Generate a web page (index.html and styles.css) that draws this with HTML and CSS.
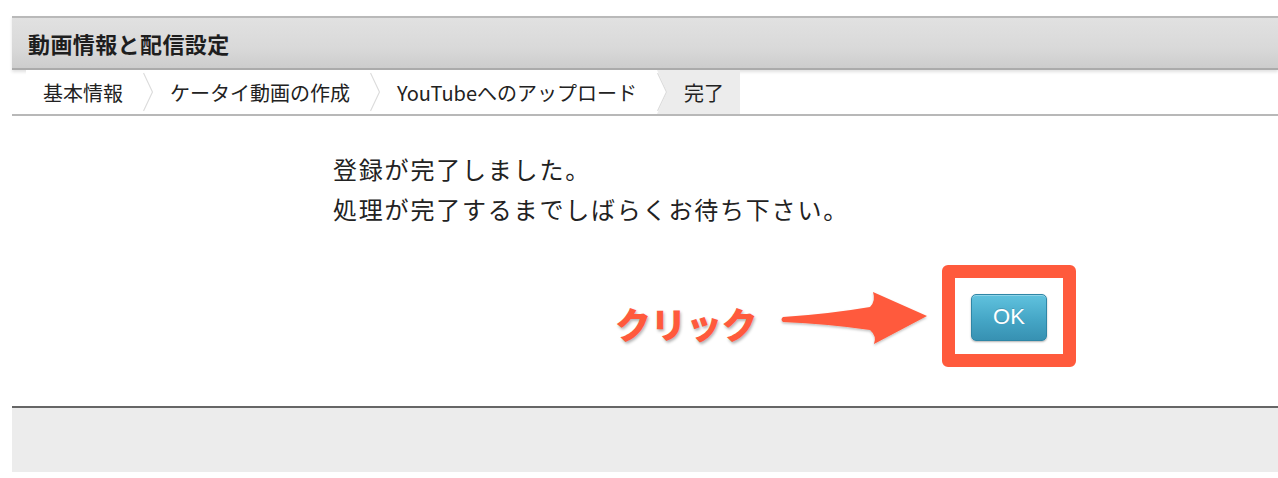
FILE: index.html
```html
<!DOCTYPE html>
<html lang="ja">
<head>
<meta charset="utf-8">
<title>動画情報と配信設定</title>
<link rel="stylesheet" href="styles.css">
</head>
<body>
<div class="page">
  <div class="titlebar"><h1>動画情報と配信設定</h1></div>
  <nav class="steps">
    <span class="step">基本情報</span>
    <svg class="sep" width="10" height="44" viewBox="0 0 10 44"><path d="M0 0 L10 22 L0 44 Z" fill="#fff"/><path d="M0.5 3 L9.5 22 L0.5 41" fill="none" stroke="#dcdcdc" stroke-width="1.2"/></svg>
    <span class="step">ケータイ動画の作成</span>
    <svg class="sep" width="10" height="44" viewBox="0 0 10 44"><path d="M0 0 L10 22 L0 44 Z" fill="#fff"/><path d="M0.5 3 L9.5 22 L0.5 41" fill="none" stroke="#dcdcdc" stroke-width="1.2"/></svg>
    <span class="step">YouTubeへのアップロード</span>
    <svg class="sep sep-current" width="10" height="44" viewBox="0 0 10 44"><path d="M0 0 L10 22 L0 44 Z" fill="#fff"/><path d="M0.5 3 L9.5 22 L0.5 41" fill="none" stroke="#dcdcdc" stroke-width="1.2"/></svg>
    <span class="step current">完了</span>
  </nav>
  <div class="content">
    <p class="msg">登録が完了しました。<br>処理が完了するまでしばらくお待ち下さい。</p>
    <div class="action">
      <span class="click">クリック</span>
      <svg class="arrow" width="152" height="60" viewBox="0 0 152 60">
        <defs>
          <filter id="sh" x="-10%" y="-20%" width="120%" height="150%">
            <feDropShadow dx="0" dy="1.5" stdDeviation="1.2" flood-color="#000" flood-opacity="0.25"/>
          </filter>
        </defs>
        <path d="M4 29 Q50 26 91 19 Q97 13 94 4 L148 28 L95 56 Q98 48 91 42 Q50 36 4 34 Q1 31.5 4 29 Z" fill="#ff5a3c" filter="url(#sh)"/>
      </svg>
      <div class="highlight"><button class="ok" type="button">OK</button></div>
    </div>
  </div>
  <div class="footer"></div>
</div>
</body>
</html>
```
FILE: styles.css
```css
html, body {
  margin: 0;
  padding: 0;
  background: #fff;
}

body {
  font-family: "Noto Sans CJK JP", "Noto Sans", sans-serif;
  color: #222;
}

.page {
  padding: 16px 0 0 12px;
}

.titlebar {
  border-top: 2px solid #b9b9b9;
  border-bottom: 2px solid #ababab;
  background: linear-gradient(#e1e1e1, #d9d9d9 60%, #cdcdcd);
  box-shadow: 0 2px 3px rgba(0, 0, 0, 0.12);
  height: 50px;
}

.titlebar h1 {
  margin: 0;
  padding-left: 16px;
  font-size: 22px;
  line-height: 50px;
  font-weight: 700;
  color: #1e1e1e;
  letter-spacing: 0.4px;
}

.steps {
  display: flex;
  align-items: stretch;
  height: 44px;
  padding-left: 14px;
  border-bottom: 2px solid #b8b8b8;
}

.step {
  display: flex;
  align-items: center;
  background: #fff;
  padding: 0 20px 0 17px;
  font-size: 20px;
  color: #222;
  white-space: nowrap;
}

.step.current {
  background: #ececec;
  padding-right: 16px;
}

.sep {
  display: block;
  flex: none;
  background: #fff;
}

.sep-current {
  background: #ececec;
}

.content {
  padding-top: 33px;
}

.msg {
  margin: 0 0 0 321px;
  font-size: 24px;
  line-height: 40px;
  letter-spacing: 1.8px;
  color: #222;
}

.action {
  display: flex;
  align-items: center;
  margin: 36px 0 0 603px;
}

.click {
  font-size: 36px;
  font-weight: 900;
  color: #ff5a3c;
  letter-spacing: -0.5px;
  -webkit-text-stroke: 6px #fff;
  paint-order: stroke fill;
  text-shadow: 1px 2px 3px rgba(0, 0, 0, 0.3);
  margin-top: 14px;
  line-height: 1;
}

.arrow {
  display: block;
  margin-left: 22px;
  margin-top: 4px;
}

.highlight {
  margin-left: 11px;
  width: 108px;
  height: 76px;
  border: 13px solid #ff5a3c;
  border-radius: 6px;
  background: #fff;
  display: flex;
  align-items: center;
  justify-content: center;
}

.ok {
  width: 76px;
  height: 47px;
  margin-top: 2px;
  border: 1px solid #2f86a6;
  border-radius: 5px;
  background: linear-gradient(#60c2de, #45a6c6 55%, #3791b2);
  color: #fff;
  font-family: "Liberation Sans", Arial, sans-serif;
  font-size: 22px;
  padding: 0;
  box-shadow: 0 1px 2px rgba(0, 0, 0, 0.3), inset 0 1px 0 rgba(255, 255, 255, 0.3);
  text-shadow: 0 -1px 0 rgba(0, 0, 0, 0.15);
}

.footer {
  margin-top: 39px;
  border-top: 2px solid #666;
  height: 64px;
  background: #ececec;
}
```
